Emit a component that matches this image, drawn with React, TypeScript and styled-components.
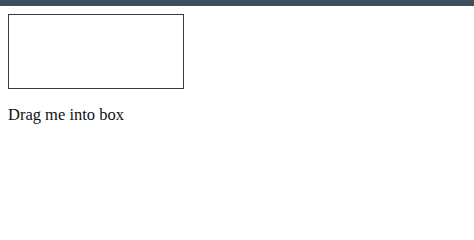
import React from "react";
import styled, { createGlobalStyle } from "styled-components";

const Global = createGlobalStyle`
  html, body { margin: 0; padding: 0; background: #ffffff; }
  body { font-family: "Liberation Serif", "Times New Roman", serif; font-size: 16px; color: #000; }
`;

const TopBar = styled.div`
  height: 6px;
  background: #3c505c;
`;

const Content = styled.div`
  padding: 8px;
`;

const DropBox = styled.div`
  width: 174px;
  height: 73px;
  border: 1px solid #3a3a3a;
`;

const Label = styled.p`
  margin: 16px 0;
  font-size: 16.5px;
  color: #111111;
`;

export default function App() {
  return (
    <>
      <Global />
      <TopBar />
      <Content>
        <DropBox />
        <Label draggable>Drag me into box</Label>
      </Content>
    </>
  );
}
